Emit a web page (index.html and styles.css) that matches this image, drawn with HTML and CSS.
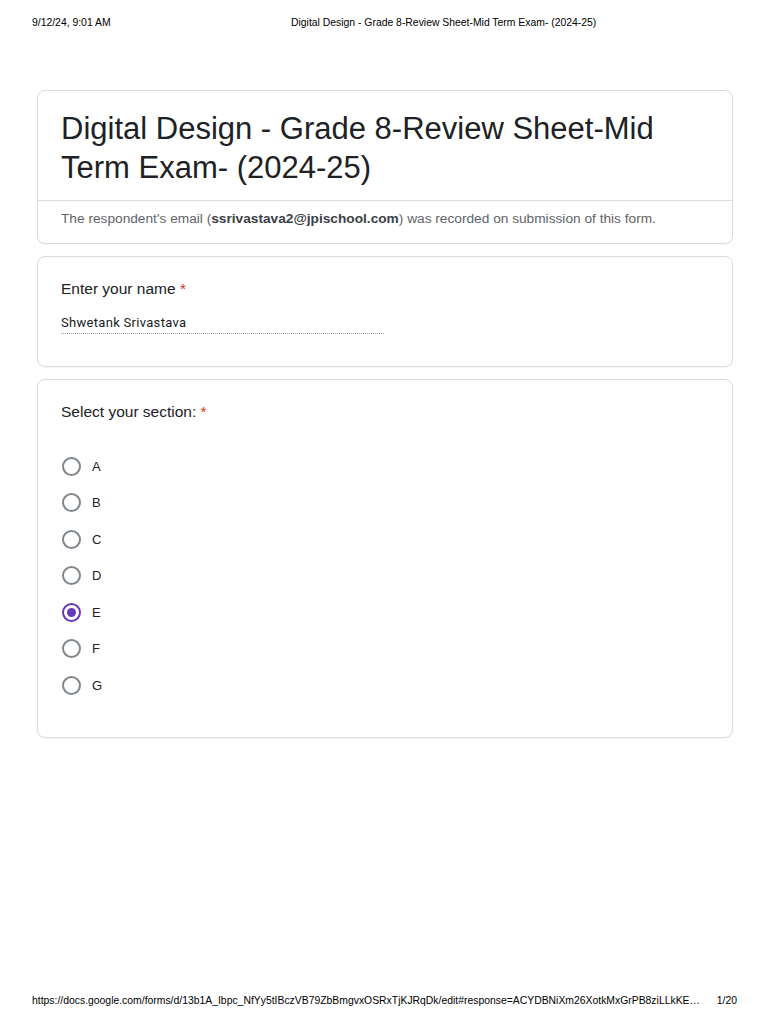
FILE: index.html
```html
<html>
	<head>
		<meta charset="utf-8" />
		<title>Digital Design - Grade 8-Review Sheet-Mid Term Exam- (2024-25)</title>
		<link rel="stylesheet" href="styles.css">
	</head>
	<body>
		<div class="print-head">
			<div class="print-date">9/12/24, 9:01 AM</div>
			<div class="print-title">Digital Design - Grade 8-Review Sheet-Mid Term Exam- (2024-25)</div>
		</div>

		<div class="form">
			<div class="card card-title">
				<div class="title-top">
					<div class="form-title">Digital Design - Grade 8-Review Sheet-Mid Term Exam- (2024-25)</div>
				</div>
				<div class="title-note">The respondent's email (<b>ssrivastava2@jpischool.com</b>) was recorded on submission of this form.</div>
			</div>

			<div class="card question">
				<div class="q-label">Enter your name <span class="req">*</span></div>
				<div class="answer">Shwetank Srivastava</div>
			</div>

			<div class="card question question-radio">
				<div class="q-label">Select your section: <span class="req">*</span></div>
				<div class="options">
					<div class="option"><span class="radio"></span><span class="opt-text">A</span></div>
					<div class="option"><span class="radio"></span><span class="opt-text">B</span></div>
					<div class="option"><span class="radio"></span><span class="opt-text">C</span></div>
					<div class="option"><span class="radio"></span><span class="opt-text">D</span></div>
					<div class="option"><span class="radio checked"></span><span class="opt-text">E</span></div>
					<div class="option"><span class="radio"></span><span class="opt-text">F</span></div>
					<div class="option"><span class="radio"></span><span class="opt-text">G</span></div>
				</div>
			</div>
		</div>

		<div class="print-foot">
			<div class="print-url">https://docs.google.com/forms/d/13b1A_Ibpc_NfYy5tIBczVB79ZbBmgvxOSRxTjKJRqDk/edit#response=ACYDBNiXm26XotkMxGrPB8ziLLkKE…</div>
			<div class="print-page">1/20</div>
		</div>
	</body>
</html>
```

FILE: styles.css
```css
body{
	margin: 0;
	width: 768px;
	height: 1024px;
	display: flex;
	flex-direction: column;
	background: #ffffff;
	font-family: "Liberation Sans", Arial, sans-serif;
	color: #202124;
}

/* 打印时浏览器加的页眉页脚 */
.print-head, .print-foot{
	display: flex;
	font-family: "Liberation Sans", Arial, sans-serif;
	font-size: 10.4px;
	color: #000;
	padding: 0 31px 0 32px;
}
.print-head{
	padding-top: 17px;
	height: 18px;
}
.print-date{
	width: 259px;
}
.print-foot{
	margin-top: auto;
	padding-bottom: 18px;
	justify-content: space-between;
}

/* 表单主体 */
.form{
	margin: 55px 0 0 37px;
	width: 696px;
	display: flex;
	flex-direction: column;
	gap: 12px;
}
.card{
	border: 1px solid #dadce0;
	border-radius: 8px;
	background: #fff;
	box-shadow: 0 1px 1px rgba(0,0,0,0.04);
}
.title-top{
	padding: 18px 24px 13px 23px;
	border-bottom: 1px solid #dadce0;
}
.form-title{
	font-size: 31px;
	line-height: 39px;
	color: #202124;
}
.title-note{
	padding: 8px 24px 15px 23px;
	font-size: 13.7px;
	line-height: 19px;
	color: #5f6368;
}
.title-note b{
	font-weight: 700;
	color: #3c4043;
}

.question{
	padding: 20px 24px 32px 23px;
}
.q-label{
	font-size: 15.5px;
	line-height: 24px;
	color: #202124;
}
.req{
	color: #d93025;
}
.answer{
	margin-top: 13px;
	width: 323px;
	font-family: Roboto, "Liberation Sans", sans-serif;
	font-size: 13px;
	line-height: 18px;
	padding-bottom: 1px;
	border-bottom: 1px dotted #9aa0a6;
	letter-spacing: 0.3px;
}

.question-radio{
	padding-bottom: 42px;
}
.options{
	margin-top: 32px;
	display: flex;
	flex-direction: column;
	gap: 16.5px;
}
.option{
	display: flex;
	align-items: center;
	height: 20px;
	font-size: 13px;
}
.radio{
	box-sizing: border-box;
	width: 19px;
	height: 19px;
	border: 2px solid #80868b;
	border-radius: 50%;
	margin: 0 11px 0 1px;
	display: flex;
	align-items: center;
	justify-content: center;
}
.radio.checked{
	border-color: #673ab7;
}
.radio.checked::after{
	content: "";
	width: 9px;
	height: 9px;
	border-radius: 50%;
	background: #673ab7;
}
```
